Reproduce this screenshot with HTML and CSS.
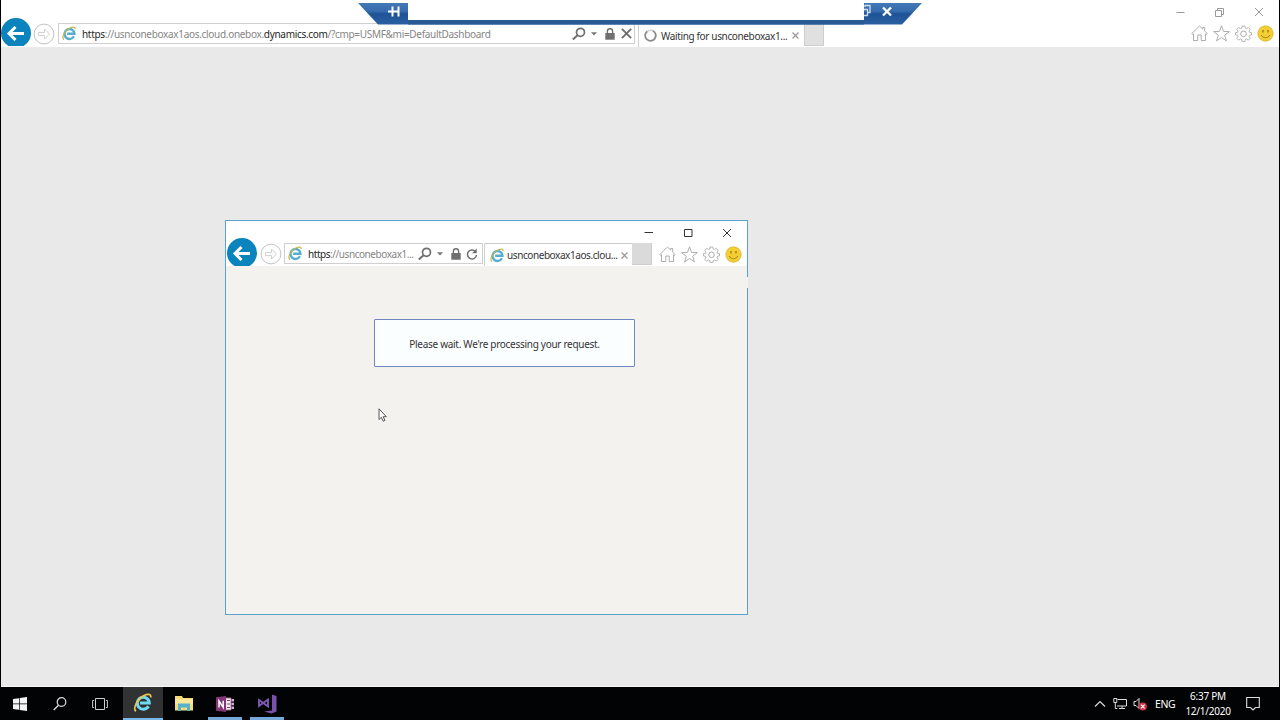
FILE: index.html
```html
<!DOCTYPE html>
<html lang="en">
<head>
<meta charset="utf-8">
<title>Remote desktop</title>
<link rel="stylesheet" href="styles.css">
</head>
<body>
<svg class="defs" aria-hidden="true">
  <defs>
    <linearGradient id="rdp" x1="0" y1="0" x2="0" y2="1">
      <stop offset="0" stop-color="#4479b8"/><stop offset=".4" stop-color="#356aac"/><stop offset=".5" stop-color="#1e5398"/><stop offset="1" stop-color="#2a609f"/>
    </linearGradient>
    <symbol id="i-back" viewBox="0 0 30 28"><circle cx="15" cy="15" r="15" fill="#0b83bd"/><path d="M23 15.500H9M14.500 9 8 15.500l6.500 6.500" fill="none" stroke="#fff" stroke-width="3"/></symbol>
    <symbol id="i-forward" viewBox="0 0 22 22"><circle cx="11" cy="11" r="9.900" fill="#fefefe" stroke="#c4c4c4" stroke-width="1"/><path d="M5.500 9.500h6V6l5 5-5 5v-3.500h-6z" fill="none" stroke="#d2d2d2" stroke-width="1"/></symbol>
    <symbol id="i-ie" viewBox="0 0 16 16"><path d="M12.700 11a5.300 5.300 0 1 1 .6-2.700H5.500" fill="none" stroke="#55add0" stroke-width="2.500"/><path d="M2.200 14.500C-1 13 2.500 5 8.500 2.200c3-1.500 5.700-1.500 5.600 1" fill="none" stroke="#c3b84b" stroke-width="1.300"/></symbol>
    <symbol id="i-ie-task" viewBox="0 0 20 20"><path d="M15.500 13.200a6 6 0 1 1 .8-3.200H7" fill="none" stroke="#6fdcf5" stroke-width="3"/><path d="M3 18.300C-.5 16 4 6 11 2.500c4-2 7.200-1.500 6.800 2" fill="none" stroke="#e9c64c" stroke-width="1.700"/></symbol>
    <symbol id="i-search" viewBox="0 0 14 14"><circle cx="8.500" cy="5.300" r="4" fill="none" stroke="#707070" stroke-width="1.700"/><path d="M5.600 8.200.8 12.600" stroke="#707070" stroke-width="2"/></symbol>
    <symbol id="i-caret" viewBox="0 0 6 4"><path d="M0 .3h6L3 3.500z" fill="#777"/></symbol>
    <symbol id="i-lock" viewBox="0 0 10 12"><path d="M.3 5h9.400v6.700H.3z" fill="#707070"/><path d="M2.400 5.500V3.400a2.600 2.600 0 0 1 5.200 0v2.100" fill="none" stroke="#707070" stroke-width="1.400"/></symbol>
    <symbol id="i-x" viewBox="0 0 10 10"><path d="m.8.8 8.400 8.400m0-8.400L.8 9.200" fill="none" stroke="currentColor" stroke-width="1.800"/></symbol>
    <symbol id="i-refresh" viewBox="0 0 12 12"><path d="M9.800 4A4.500 4.500 0 1 0 10.500 7" fill="none" stroke="#707070" stroke-width="1.500"/><path d="M10.700.5v4.800H6z" fill="#707070"/></symbol>
    <symbol id="i-home" viewBox="0 0 17 17"><path d="M.8 8.500 8.500 1l3.200 3.100V2.500h2v3.600l2.600 2.500-1 1-.8-.8v6.700h-4.300V10H6.800v5.500H2.500V8.800l-.8.700z" fill="#fff" stroke="#a5a5a5" stroke-width=".9"/></symbol>
    <symbol id="i-star" viewBox="0 0 17 17"><path d="m8.500.8 2 5.600 5.900.2-4.700 3.600 1.700 5.700-4.900-3.400-4.900 3.400 1.700-5.700L.6 6.600l5.900-.2z" fill="#fff" stroke="#a5a5a5" stroke-width=".9"/></symbol>
    <symbol id="i-gear" viewBox="0 0 17 17"><path d="M7.200 1h2.600l.4 2 1.300.6 1.800-1.200 1.900 1.900L14 6l.5 1.300 2 .4v2.200l-2 .4L14 11.500l1.200 1.800-1.900 1.900-1.800-1.200-1.300.6-.4 2H7.200l-.4-2-1.300-.6-1.800 1.200-1.900-1.900L3 11.500l-.5-1.200-2-.4V7.700l2-.4L3 6 1.800 4.300l1.900-1.900 1.800 1.200L6.800 3z" fill="#fff" stroke="#a9a9a9" stroke-width=".9"/><circle cx="8.500" cy="8.800" r="2.800" fill="none" stroke="#a9a9a9"/></symbol>
    <symbol id="i-smile" viewBox="0 0 17 17"><circle cx="8.500" cy="8.500" r="7.700" fill="#f5cf31" stroke="#d9b23a" stroke-width=".8"/><path d="M6 5v2.500M11 5v2.500" stroke="#a07c1c" stroke-width="1.400"/><path d="M4.200 10c1.500 3.600 7.100 3.600 8.600 0" fill="none" stroke="#a8841f"/></symbol>
  </defs>
</svg>

<div class="desktop">
  <main class="browser">
    <header class="chrome">
      <svg class="back"><use href="#i-back"/></svg>
      <svg class="forward"><use href="#i-forward"/></svg>
      <div class="address">
        <svg class="ie"><use href="#i-ie"/></svg>
        <span class="url url-main"><span class="dark">https</span>://usnconeboxax1aos.cloud.onebox.<span class="dark">dynamics.com</span>/?cmp=USMF&amp;mi=DefaultDashboard</span>
        <span class="tools"><svg class="search"><use href="#i-search"/></svg><svg class="caret"><use href="#i-caret"/></svg><svg class="lock"><use href="#i-lock"/></svg><svg class="stop"><use href="#i-x"/></svg></span>
      </div>
      <div class="tab">
        <svg class="spinner" viewBox="0 0 12 12"><circle cx="6" cy="6" r="4.900" fill="none" stroke="#d5d5d5" stroke-width="1.700"/><path d="M3 2.100a4.900 4.900 0 1 0 5.300-.4" fill="none" stroke="#8a8a8a" stroke-width="1.500"/></svg>
        <span class="tab-title wait-title">Waiting for usnconeboxax1...</span>
        <svg class="tab-close"><use href="#i-x"/></svg>
      </div>
      <div class="new-tab"></div>
      <div class="side">
        <div class="controls">
          <svg viewBox="0 0 10 10"><path d="M.5 5.500h8"/></svg>
          <svg viewBox="0 0 10 10"><path d="M1.500 3.500h6v6h-6zM3.500 3V1.500h6v6H8"/></svg>
          <svg viewBox="0 0 10 10"><path d="m1 1 8 8m0-8L1 9"/></svg>
        </div>
        <div class="commands"><svg><use href="#i-home"/></svg><svg><use href="#i-star"/></svg><svg><use href="#i-gear"/></svg><svg><use href="#i-smile"/></svg></div>
      </div>
    </header>
  </main>

  <footer class="taskbar">
    <div class="task"><svg width="14" height="14" viewBox="0 0 14 14"><path d="M0 2 6 1.200v5.400H0zM6.700 1.100 14 0v6.600H6.700zM0 7.300h6v5.400L0 11.900zM6.700 7.300H14V14l-7.300-1.100z" fill="#f4f4f4"/></svg></div>
    <div class="task"><svg width="14" height="14" viewBox="0 0 14 14"><circle cx="8.500" cy="5" r="4.300" fill="none" stroke="#ddd" stroke-width="1.200"/><path d="M5.500 8.200.7 13" stroke="#ddd" stroke-width="1.300"/></svg></div>
    <div class="task"><svg width="16" height="14" viewBox="0 0 16 14"><path d="M3.500 1.500h9v11h-9zM2 3.500H.6v7H2M14 3.500h1.400v7H14" fill="none" stroke="#ccc"/></svg></div>
    <div class="task active"><svg width="20" height="20"><use href="#i-ie-task"/></svg></div>
    <div class="task"><svg width="18" height="16" viewBox="0 0 18 16"><path d="M0 0h7l1 2h10v12.500H0z" fill="#f6d979"/><path d="M0 3h18v5H0z" fill="#fbe69c"/><path d="M3 7.500h12V15h-3v-3.500H6V15H3z" fill="#55b2cc"/></svg></div>
    <div class="task running"><svg width="18" height="16" viewBox="0 0 18 16"><path d="M9.500 2h5.500v12H9.500z" fill="#f2e9f0" stroke="#a86d9e" stroke-width=".8"/><path d="M15.500 3H18v2.500h-2.500zM15.500 6.800H18v2.500h-2.500zM15.500 10.600H18v2.500h-2.500z" fill="#d9b2d2"/><path d="M11 4.500h3M11 8h3M11 11.500h3" stroke="#854077"/><path d="m0 1.200 10-1.200v16L0 14.800z" fill="#823774"/><path d="M3 11.500V5l4.200 6.300V4.700" fill="none" stroke="#fff" stroke-width="1.500"/></svg></div>
    <div class="task running"><svg width="20" height="20" viewBox="0 0 20 20"><path d="m15 .5 4.500 1.500v15.500l-5 2L7 17.500l8-1z" fill="#7852ad"/><path d="m2 6 9 6.500v-7L2 12z" fill="none" stroke="#8058b5" stroke-width="1.900"/></svg></div>
    <div class="tray">
      <svg width="12" height="8" viewBox="0 0 12 8"><path d="m1 6.500 5-5 5 5" fill="none" stroke="#ddd" stroke-width="1.200"/></svg>
      <svg class="net" width="15" height="13" viewBox="0 0 15 13"><path d="M4.500 2.500h9v6.500H4M9 9v2.500M6 11.500h6M.8 1.500h3v4h-3zM2.300 5.500v6h2" fill="none" stroke="#ddd"/></svg>
      <svg class="sound" width="14" height="14" viewBox="0 0 14 14"><path d="M1 4.500h2l3-3v10l-3-3H1z" fill="none" stroke="#ddd"/><circle cx="9.800" cy="9.500" r="4" fill="#cf3548"/><path d="m8 7.700 3.600 3.600m0-3.600L8 11.300" stroke="#fff" stroke-width="1.100"/></svg>
      <span class="lang">ENG</span>
      <div class="clock"><span>6:37 PM</span><span>12/1/2020</span></div>
      <svg class="note" width="14" height="15" viewBox="0 0 14 15"><path d="M.7 1.500h12.600v10H9.500L7 14l-2.500-2.500H.7z" fill="none" stroke="#ddd" stroke-width="1.100"/></svg>
    </div>
  </footer>

  <div class="rdp">
    <svg viewBox="0 0 564 22"><path d="M0 0h564l-20 21.500H20z" fill="url(#rdp)"/><path d="M50 0h456v17H50z" fill="#fff"/><path d="M50 17h456v4.500H50z" fill="#285b93"/>
      <path d="M30 8.500h4M34.500 3.500v10M40.500 3.500v10M34 8.500h6" stroke="#fff" stroke-width="2" fill="none"/>
      <path d="M506 6.500h3.500v6H506M507 4V2.500h5v7H510" stroke="#cfdeed" stroke-width="1.300" fill="none"/>
      <path d="m525 4.500 8 8m0-8-8 8" stroke="#fff" stroke-width="2.300"/></svg>
  </div>

  <section class="popup">
    <div class="popup-controls">
      <svg viewBox="0 0 10 10"><path d="M.5 4.500h8.500"/></svg>
      <svg viewBox="0 0 10 10"><path d="M1.500 1.500H9v7H1.500z"/></svg>
      <svg viewBox="0 0 10 10"><path d="m1 1 8 8m0-8L1 9"/></svg>
    </div>
    <header class="popup-chrome">
      <svg class="back"><use href="#i-back"/></svg>
      <svg class="forward"><use href="#i-forward"/></svg>
      <div class="address small">
        <svg class="ie"><use href="#i-ie"/></svg>
        <span class="url url-pop"><span class="dark">https</span>://usnconeboxax1...</span>
        <span class="tools"><svg class="search"><use href="#i-search"/></svg><svg class="caret"><use href="#i-caret"/></svg><svg class="lock"><use href="#i-lock"/></svg><svg class="reload"><use href="#i-refresh"/></svg></span>
      </div>
      <div class="tab small">
        <svg class="ie"><use href="#i-ie"/></svg>
        <span class="tab-title pop-title">usnconeboxax1aos.clou...</span>
        <svg class="tab-close"><use href="#i-x"/></svg>
      </div>
      <div class="new-tab"></div>
      <div class="commands"><svg><use href="#i-home"/></svg><svg><use href="#i-star"/></svg><svg><use href="#i-gear"/></svg><svg><use href="#i-smile"/></svg></div>
    </header>
    <div class="popup-body"><div class="message"><span>Please wait. We're processing your request.</span></div></div>
    <i class="edge-gap"></i>
  </section>

  <svg class="cursor" viewBox="0 0 9 14"><path d="M1 .8v10.700l2.400-2.200 1.700 3.900 1.800-.8-1.700-3.700h3.100z" fill="#fff" stroke="#444" stroke-width=".9"/></svg>
</div>
</body>
</html>
```

FILE: styles.css
```css
* { box-sizing: border-box; }
body { margin: 0; font-family: "Noto Sans", "Open Sans", sans-serif; font-size: 10px; color: #333; }
svg { display: block; flex: none; }
.defs { position: absolute; width: 0; height: 0; }
.desktop { position: relative; width: 1280px; height: 720px; display: flex; flex-direction: column; overflow: hidden; background: #000; }

.browser { flex: 1; margin: 0 1px; background: #e9e9e9; border-bottom: 1px solid #f7f7f7; }
.chrome { display: flex; align-items: flex-start; height: 47px; background: #fff; }
.back { width: 30px; height: 28px; margin-top: 18px; }
.forward { width: 22px; height: 22px; margin: 23px 0 0 2px; }
.address { display: flex; align-items: center; width: 577px; height: 21px; margin: 23px 0 0 3px; padding: 0 2px 0 3px; border: 1px solid #cfcfcf; background: #fff; }
.ie { width: 15px; height: 15px; }
.url { margin-left: 5px; color: #858585; white-space: nowrap; line-height: 15px; padding-top: 1px; }
.dark { color: #262626; }
.tools { display: flex; align-items: center; margin-left: auto; }
.search { width: 14px; height: 14px; }
.caret { width: 6px; height: 4px; margin-left: 5px; }
.lock { width: 10px; height: 12px; margin-left: 8px; }
.stop { width: 11px; height: 11px; margin-left: 6px; color: #707070; }
.reload { width: 12px; height: 12px; margin-left: 5px; }
.tab { display: flex; align-items: center; width: 166px; height: 23px; margin: 24px 0 0 3px; padding: 0 5px; border-left: 1px solid #d0d0d0; background: #fff; }
.spinner { width: 13px; height: 13px; }
.tab-title { margin-left: 4px; white-space: nowrap; line-height: 15px; }
.tab .tab-close { width: 7px; height: 7px; margin-left: auto; color: #999; }
.new-tab { width: 20px; height: 22px; margin-top: 24px; border: 1px solid #cdcdcd; border-top: 0; background: #e0e0e0; }
.side { margin-left: auto; padding-right: 5px; }
.controls, .popup-controls { display: flex; justify-content: flex-end; }
.controls { gap: 29px; padding: 7px 10px 0 0; }
.controls svg, .popup-controls svg { width: 10px; height: 10px; fill: none; stroke: #999; }
.controls svg:nth-child(2) { margin: 0 1px 0 -1px; }
.commands { display: flex; gap: 5px; justify-content: flex-end; }
.commands svg { width: 17px; height: 17px; }
.side .commands { margin-top: 8px; }

.taskbar { display: flex; height: 33px; background: #020305; color: #fff; }
.task { width: 40px; margin-right: 1px; display: flex; align-items: center; justify-content: center; position: relative; }
.task:nth-child(-n+2) { margin-right: 0; }
.task:nth-child(3) { margin-right: 3px; }
.active { background: #303234; border-bottom: 2px solid #76b9e8; padding-top: 1px; }
.running::after { content: ""; position: absolute; bottom: 0; left: 3px; width: 34px; height: 3px; background: #76a9d8; }
.task:nth-child(7) { left: 1px; }
.tray { display: flex; align-items: center; margin-left: auto; padding-right: 20px; }
.net { margin-left: 7px; }
.sound { margin-left: 5px; }
.lang { margin-left: 8px; width: 20px; font-size: 10.5px; letter-spacing: -.4px; }
.clock { display: flex; flex-direction: column; align-items: center; width: 54px; margin-left: 6px; line-height: 15px; font-size: 10px; letter-spacing: -.25px; }
.note { margin-left: 11px; }

.rdp { position: absolute; left: 358px; top: 3px; width: 564px; height: 22px; }
.rdp svg { width: 564px; height: 22px; }

.popup { position: absolute; left: 225px; top: 220px; width: 523px; height: 395px; border: 1px solid #5ba3cc; background: #fff; display: flex; flex-direction: column; }
.popup-controls { gap: 29px; height: 17px; padding: 7px 15px 0 0; }
.popup-controls svg { stroke: #333; }
.popup-chrome { display: flex; align-items: flex-start; height: 28px; }
.popup-chrome .back { margin: 0 0 0 1px; }
.popup-chrome .forward { margin: 5px 0 0 3px; }
.address.small { width: 199px; margin: 5px 0 0 2px; padding-right: 4px; }
.tab.small { width: 148px; height: 23px; margin: 5px 0 0 1px; border-top: 1px solid #ccc; padding-right: 4px; }
.tab.small .tab-title { margin-left: 2px; }
.popup .new-tab { margin-top: 5px; background: #dadada; border-left: 0; }
.popup .commands { margin: 8px 0 0 7px; }
.popup-body { flex: 1; background: #f3f2ef; padding: 53px 0 0 148px; }
.message { display: flex; align-items: center; justify-content: center; width: 261px; height: 48px; padding-top: 1px; border: 1px solid #7088c0; border-radius: 1px; background: #fbfeff; }
.message span { white-space: nowrap; letter-spacing: -.29px; }
.edge-gap { position: absolute; right: -1px; top: 56px; width: 1px; height: 11px; background: #f3f3f2; }
.cursor { position: absolute; left: 378px; top: 408px; width: 9px; height: 14px; }
.url-main { letter-spacing: -.31px; }
.wait-title { letter-spacing: -.36px; padding-top: 1px; }
.pop-title { letter-spacing: -.42px; padding-top: 1px; }
.url-pop { letter-spacing: -.45px; }
```
